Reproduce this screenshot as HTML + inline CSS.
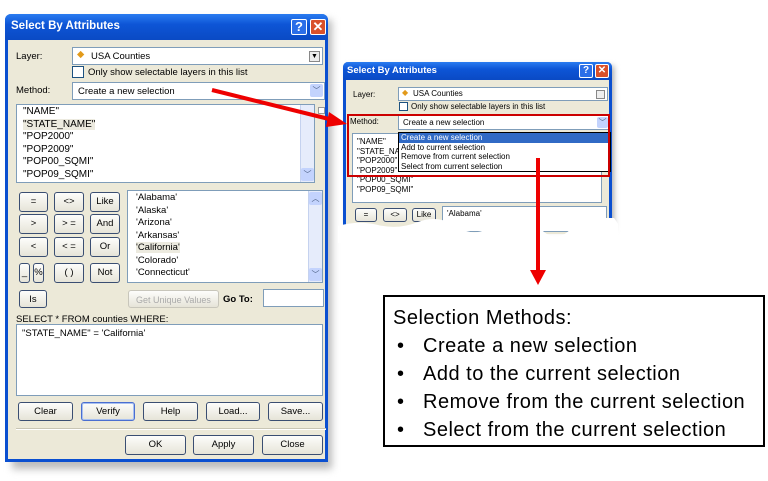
<!DOCTYPE html>
<html><head><meta charset="utf-8"><style>
*{margin:0;padding:0;box-sizing:border-box}
body{width:768px;height:481px;background:#fff;position:relative;overflow:hidden;font-family:"Liberation Sans",sans-serif;font-size:9.5px;color:#000}
.a{position:absolute}
.dlg{background:#ece9d8;border:3px solid #0a4fd0;border-top:none}
.tb{background:linear-gradient(#2a7cf0,#0d55d6 40%,#0a4ac4);color:#fff;font-weight:bold}
.btn{position:absolute;background:linear-gradient(#fdfdfb,#e6e4d8);border:1px solid #3a4e72;border-radius:3px;text-align:center;font-size:9.5px;line-height:18px}
.box{position:absolute;background:#fff;border:1px solid #7f9db9}
.sb{position:absolute;background:#e6ecfb;border-left:1px solid #c5d2ef}
.sq{position:absolute;width:16px;height:16px;border-radius:2px;border:1px solid #fff;font-weight:bold;color:#fff;text-align:center;line-height:14px;font-size:13px}
.arr{position:absolute;width:13px;height:13px;background:#c3d3fd;border-radius:2px;color:#4d6185;font-size:8px;text-align:center;line-height:13px}
</style></head><body>
<div class="a" style="left:12px;top:20px;width:320px;height:449px;background:#bbb;filter:blur(4px)"></div>
<div class="a dlg" style="left:5px;top:14px;width:323px;height:448px;border-radius:6px 6px 0 0">
 <div class="a tb" style="left:-3px;top:0;width:323px;height:26px;border-radius:6px 6px 0 0;padding:6px 0 0 6px;font-size:11.5px">Select By Attributes</div>
 <div class="sq" style="left:283px;top:5px;background:#2b6ee8">?</div>
 <div class="sq" style="left:302px;top:5px;background:#d9502a">✕</div>
 <div class="a" style="left:8px;top:37px">Layer:</div>
 <div class="box" style="left:64px;top:33px;width:251px;height:18px"><span style="position:absolute;left:4px;top:1px;color:#e29a1a">◆</span><span style="position:absolute;left:18px;top:3px">USA Counties</span><div style="position:absolute;right:2px;top:3px;width:11px;height:11px;background:#eee;border:1px solid #888;font-size:7px;text-align:center;line-height:9px">▼</div></div>
 <div class="a" style="left:64px;top:52px;width:12px;height:12px;border:1px solid #1c5180;background:#fff"></div>
 <div class="a" style="left:80px;top:53px">Only show selectable layers in this list</div>
 <div class="a" style="left:8px;top:71px">Method:</div>
 <div class="box" style="left:64px;top:68px;width:253px;height:18px"><span style="position:absolute;left:5px;top:3px">Create a new selection</span><div class="arr" style="right:1px;top:1px">﹀</div></div>
 <div class="box" style="left:8px;top:90px;width:299px;height:79px;line-height:12.5px;padding:1px 6px;font-size:10px">"NAME"<br><span style="background:#eceadf">"STATE_NAME"</span><br>"POP2000"<br>"POP2009"<br>"POP00_SQMI"<br>"POP09_SQMI"<div class="sb" style="right:0;top:0;width:14px;height:77px"></div><div class="arr" style="right:0;bottom:1px">﹀</div></div>
 <div class="a" style="left:310px;top:93px;width:7px;height:7px;border:1px solid #999;background:#fff"></div>
 <div class="btn" style="left:11px;top:178px;width:29px;height:20px">=</div>
 <div class="btn" style="left:46px;top:178px;width:30px;height:20px">&lt;&gt;</div>
 <div class="btn" style="left:82px;top:178px;width:30px;height:20px">Like</div>
 <div class="btn" style="left:11px;top:200px;width:29px;height:20px">&gt;</div>
 <div class="btn" style="left:46px;top:200px;width:30px;height:20px">&gt; =</div>
 <div class="btn" style="left:82px;top:200px;width:30px;height:20px">And</div>
 <div class="btn" style="left:11px;top:223px;width:29px;height:20px">&lt;</div>
 <div class="btn" style="left:46px;top:223px;width:30px;height:20px">&lt; =</div>
 <div class="btn" style="left:82px;top:223px;width:30px;height:20px">Or</div>
 <div class="btn" style="left:11px;top:249px;width:11px;height:20px">_</div>
 <div class="btn" style="left:25px;top:249px;width:11px;height:20px">%</div>
 <div class="btn" style="left:46px;top:249px;width:30px;height:20px">( )</div>
 <div class="btn" style="left:82px;top:249px;width:30px;height:20px">Not</div>
 <div class="box" style="left:119px;top:176px;width:196px;height:93px;line-height:12.5px;padding:1px 8px;font-size:9.5px">'Alabama'<br>'Alaska'<br>'Arizona'<br>'Arkansas'<br><span style="background:#eceadf">'California'</span><br>'Colorado'<br>'Connecticut'<div class="sb" style="right:0;top:0;width:14px;height:91px"></div><div class="arr" style="right:0;top:1px">︿</div><div class="arr" style="right:0;bottom:1px">﹀</div></div>
 <div class="btn" style="left:11px;top:276px;width:28px;height:18px">Is</div>
 <div class="btn" style="left:120px;top:276px;width:91px;height:18px;color:#aaa;border-color:#c8c6bb;font-size:9px">Get Unique Values</div>
 <div class="a" style="left:215px;top:280px;font-weight:bold">Go To:</div>
 <div class="box" style="left:255px;top:275px;width:61px;height:18px"></div>
 <div class="a" style="left:8px;top:300px">SELECT * FROM counties WHERE:</div>
 <div class="box" style="left:8px;top:310px;width:307px;height:72px;padding:3px 5px">"STATE_NAME" = 'California'</div>
 <div class="btn" style="left:10px;top:388px;width:55px;height:19px">Clear</div>
 <div class="btn" style="left:73px;top:388px;width:54px;height:19px;border-color:#4a6ed0;box-shadow:inset 0 0 0 1px #a8c0f0">Verify</div>
 <div class="btn" style="left:135px;top:388px;width:55px;height:19px">Help</div>
 <div class="btn" style="left:198px;top:388px;width:54px;height:19px">Load...</div>
 <div class="btn" style="left:260px;top:388px;width:55px;height:19px">Save...</div>
 <div class="a" style="left:8px;top:414px;width:310px;border-top:1px solid #c8c5b4;border-bottom:1px solid #fff"></div>
 <div class="btn" style="left:117px;top:421px;width:61px;height:20px">OK</div>
 <div class="btn" style="left:185px;top:421px;width:61px;height:20px">Apply</div>
 <div class="btn" style="left:254px;top:421px;width:61px;height:20px">Close</div>
</div>
<div class="a" style="left:347px;top:66px;width:267px;height:164px;background:#aaa;filter:blur(3px)"></div>
<div class="a dlg" style="left:343px;top:62px;width:269px;height:172px;border-radius:5px 5px 0 0;border-bottom:none">
 <div class="a tb" style="left:-3px;top:0;width:269px;height:18px;border-radius:5px 5px 0 0;padding:3px 0 0 4px;font-size:9.5px">Select By Attributes</div>
 <div class="sq" style="left:233px;top:2px;width:14px;height:14px;background:#2b6ee8;font-size:10px;line-height:12px">?</div>
 <div class="sq" style="left:249px;top:2px;width:14px;height:14px;background:#d9502a;font-size:10px;line-height:12px">✕</div>
 <div class="a" style="left:7px;top:28px;font-size:8px">Layer:</div>
 <div class="box" style="left:52px;top:25px;width:210px;height:14px;font-size:8px"><span style="position:absolute;left:3px;top:0;color:#e29a1a">◆</span><span style="position:absolute;left:14px;top:1px">USA Counties</span><div style="position:absolute;right:2px;top:2px;width:9px;height:9px;background:#eee;border:1px solid #888"></div></div>
 <div class="a" style="left:53px;top:40px;width:9px;height:9px;border:1px solid #1c5180;background:#fff"></div>
 <div class="a" style="left:65px;top:40px;font-size:8px">Only show selectable layers in this list</div>
 <div class="a" style="left:4px;top:55px;font-size:8px">Method:</div>
 <div class="box" style="left:52px;top:53px;width:212px;height:15px;font-size:8px"><span style="position:absolute;left:4px;top:2px">Create a new selection</span><div class="arr" style="right:1px;top:1px;width:11px;height:11px;line-height:11px">﹀</div></div>
 <div class="box" style="left:6px;top:71px;width:250px;height:70px;font-size:8px;line-height:9.5px;padding:3px 4px">"NAME"<br>"STATE_NA<br>"POP2000"<br>"POP2009"<br>"POP00_SQMI"<br>"POP09_SQMI"</div>
 <div class="box" style="left:52px;top:70px;width:213px;height:40px;border-color:#000;font-size:8px;line-height:9.5px"><div style="background:#316ac5;color:#fff;padding-left:2px">Create a new selection</div><div style="padding-left:2px">Add to current selection<br>Remove from current selection<br>Select from current selection</div></div>
 <div class="btn" style="left:9px;top:146px;width:22px;height:14px;line-height:12px;font-size:8px">=</div>
 <div class="btn" style="left:37px;top:146px;width:24px;height:14px;line-height:12px;font-size:8px">&lt;&gt;</div>
 <div class="btn" style="left:66px;top:146px;width:24px;height:14px;line-height:12px;font-size:8px">Like</div>
 <div class="box" style="left:96px;top:144px;width:165px;height:26px;font-size:8px;padding:2px 4px">'Alabama'</div>
</div>
<svg class="a" style="left:338px;top:218px" width="280" height="25"><path d="M0 8 Q20 2 40 7 T80 4 T120 9 T160 3 T200 8 T240 2 T280 6 L280 25 L0 25Z" fill="#fff"/></svg>
<div class="a" style="left:347px;top:114px;width:263px;height:63px;border:2px solid #c00"></div>
<svg class="a" style="left:0;top:0" width="768" height="481">
 <line x1="212" y1="90" x2="333" y2="120" stroke="#e00" stroke-width="4"/>
 <polygon points="347,124 329,112 326,127" fill="#e00"/>
 <line x1="538" y1="158" x2="538" y2="272" stroke="#e00" stroke-width="4"/>
 <polygon points="530,270 546,270 538,285" fill="#e00"/>
</svg>
<div class="a" style="left:383px;top:295px;width:382px;height:152px;border:2px solid #000;font-size:20px;line-height:28px;padding:7px 0 0 8px;letter-spacing:0.5px">
 <div>Selection Methods:</div>
 <div><span style="display:inline-block;width:30px;padding-left:4px">•</span>Create a new selection</div>
 <div><span style="display:inline-block;width:30px;padding-left:4px">•</span>Add to the current selection</div>
 <div><span style="display:inline-block;width:30px;padding-left:4px">•</span>Remove from the current selection</div>
 <div><span style="display:inline-block;width:30px;padding-left:4px">•</span>Select from the current selection</div>
</div>
</body></html>
